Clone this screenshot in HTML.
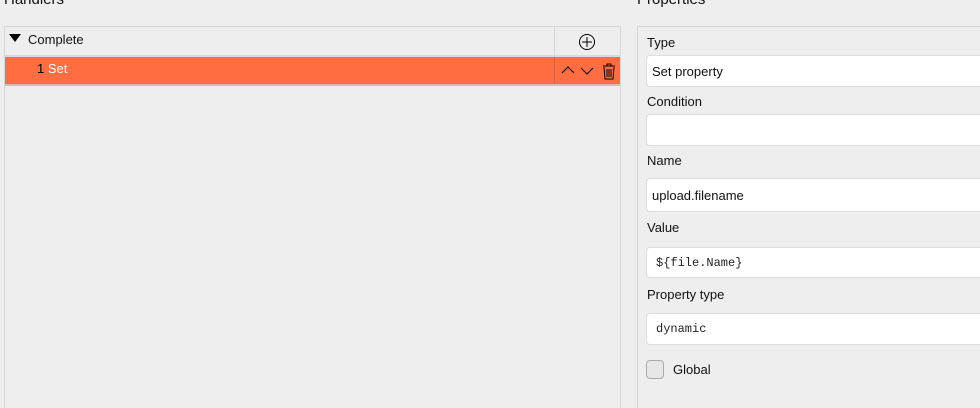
<!DOCTYPE html>
<html><head><style>
html,body{margin:0;width:980px;height:408px;overflow:hidden}
body{background:#eeeeee;font-family:"Liberation Sans",sans-serif;position:relative;color:#111}
.a{position:absolute}
.title{font-size:15px;top:-9px}
.lbl{font-size:13px;left:647px}
.inp{left:646px;width:334px;background:#fff;border:1px solid #ddd;border-right:none;border-radius:4px 0 0 4px;box-sizing:border-box;font-size:13px;padding-left:5px;display:flex;align-items:center}
.mono{font-family:"Liberation Mono",monospace;font-size:12px;padding-left:9px;color:#222}
</style></head><body>
<div class="a title" style="left:4px">Handlers</div>
<div class="a title" style="left:637px">Properties</div>
<div class="a" style="left:4px;top:26px;width:617px;height:382px;border:1px solid #d6d6d6;border-bottom:none;box-sizing:border-box"></div>
<div class="a" style="left:5px;top:55px;width:615px;height:2px;background:#dadada"></div>
<div class="a" style="left:554px;top:27px;width:1px;height:58px;background:#d6d6d6"></div>
<div class="a" style="left:5px;top:57px;width:615px;height:27px;background:#ff6d40"></div>
<div class="a" style="left:554px;top:57px;width:1px;height:27px;background:#d06040"></div>
<div class="a" style="left:5px;top:84px;width:615px;height:2px;background:#e0b8a8"></div>
<div class="a" style="left:9px;top:34px;width:0;height:0;border-left:6px solid transparent;border-right:6px solid transparent;border-top:8px solid #000"></div>
<div class="a" style="left:28px;top:32px;font-size:13px">Complete</div>
<div class="a" style="left:37px;top:61px;font-size:13px"><span style="color:#000">1</span> <span style="color:#fff">Set</span></div>
<svg class="a" style="left:578px;top:33px" width="18" height="18"><circle cx="9" cy="9" r="7.5" fill="none" stroke="#000" stroke-width="1"/><path d="M9 4v10M4 9h10" stroke="#000" stroke-width="1"/></svg>
<svg class="a" style="left:560px;top:62px" width="58" height="18"><path d="M2 11l6-6 6 6M21 6l6 6 6-6" fill="none" stroke="#000" stroke-width="1"/><path d="M43 4h12M47 4v-2h4v2M44 5l1 12h8l1-12M47 7v8M49 7v8M51 7v8" fill="none" stroke="#000" stroke-width="1"/></svg>
<div class="a" style="left:637px;top:26px;width:343px;height:382px;border:1px solid #d6d6d6;border-right:none;border-bottom:none;box-sizing:border-box"></div>
<div class="a lbl" style="top:35px">Type</div>
<div class="a inp" style="top:55px;height:32px">Set property</div>
<div class="a lbl" style="top:94px">Condition</div>
<div class="a inp" style="top:114px;height:32px"></div>
<div class="a lbl" style="top:153px">Name</div>
<div class="a inp" style="top:178px;height:34px">upload.filename</div>
<div class="a lbl" style="top:220px">Value</div>
<div class="a inp mono" style="top:247px;height:31px">${file.Name}</div>
<div class="a lbl" style="top:287px">Property type</div>
<div class="a inp mono" style="top:313px;height:32px">dynamic</div>
<div class="a" style="left:646px;top:360px;width:18px;height:19px;border:1px solid #aaa;border-radius:4px;background:#e6e6e6;box-sizing:border-box"></div>
<div class="a" style="left:673px;top:362px;font-size:13px">Global</div>
</body></html>
